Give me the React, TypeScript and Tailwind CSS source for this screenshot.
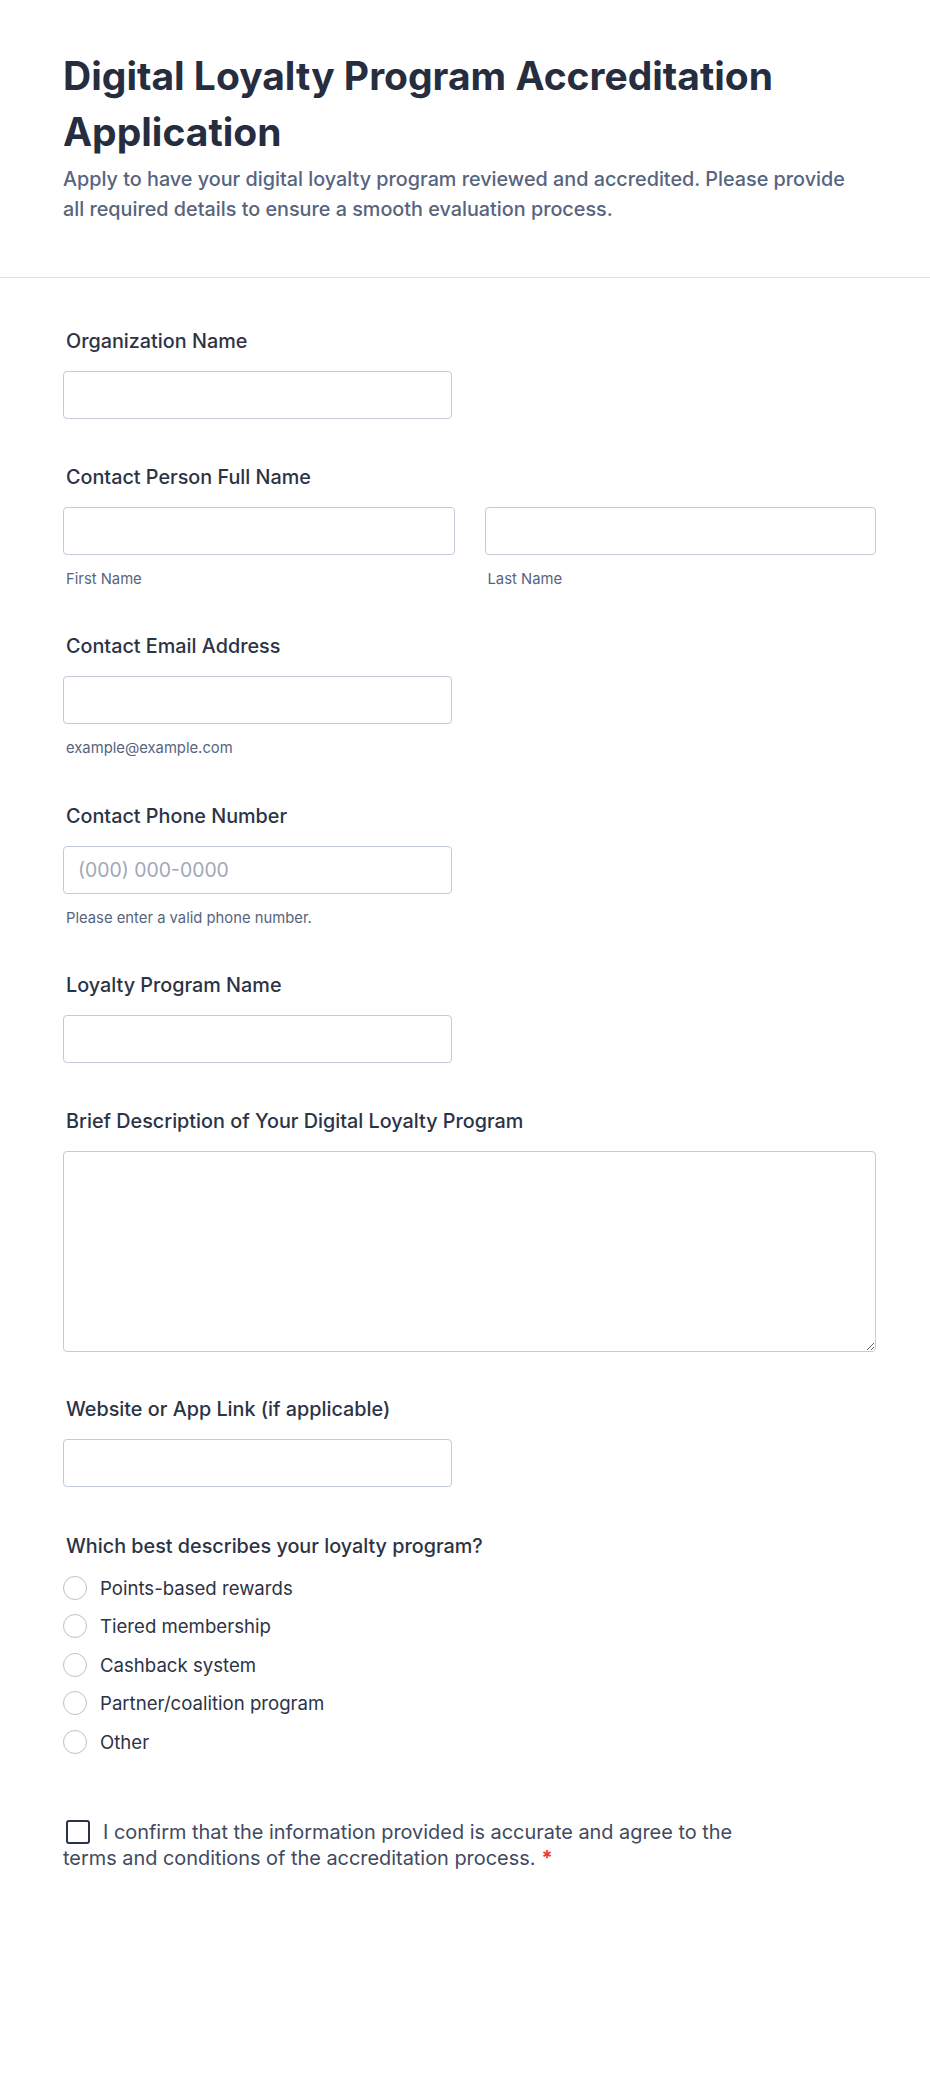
import React from "react";

const labelCls = "block pl-[3px] text-[19.8px] leading-[24px] font-medium text-[#2c3345]";
const inputCls =
  "block h-[48px] w-full rounded-[4px] border border-[#c3cad8] bg-white px-[14px] text-[19.4px] text-[#2c3345] placeholder:text-[#a0a8b9] outline-none";
const subCls = "mt-[14px] pl-[3px] text-[14.8px] leading-[20px] text-[#57647e]";

function Field({ label, children }: { label: string; children: React.ReactNode }) {
  return (
    <div className="flex flex-col">
      <label className={labelCls}>{label}</label>
      <div className="mt-[18px]">{children}</div>
    </div>
  );
}

export default function App() {
  const options = [
    "Points-based rewards",
    "Tiered membership",
    "Cashback system",
    "Partner/coalition program",
    "Other",
  ];
  return (
    <div
      className="min-h-[2077px] bg-white text-[#2c3345]"
      style={{ fontFamily: "Inter, 'Noto Sans', sans-serif" }}
    >
      <header className="border-b border-[#dcdfe8] px-[63px] pt-[48px] pb-[53px]">
        <h1 className="max-w-[800px] text-[39px] leading-[56px] font-bold text-[#262d3f]">
          Digital Loyalty Program Accreditation Application
        </h1>
        <p className="mt-[4px] max-w-[796px] text-[19.8px] leading-[30px] font-medium text-[#57647e]">
          Apply to have your digital loyalty program reviewed and accredited. Please provide all
          required details to ensure a smooth evaluation process.
        </p>
      </header>

      <main className="flex flex-col gap-[45.5px] pl-[63px] pr-[54px] pt-[51px]">
        <Field label="Organization Name">
          <input className={inputCls + " !w-[389px]"} type="text" />
        </Field>

        <div className="flex flex-col">
          <label className={labelCls}>Contact Person Full Name</label>
          <div className="mt-[18px] grid grid-cols-2 gap-[30px]">
            <div>
              <input className={inputCls} type="text" />
              <div className={subCls}>First Name</div>
            </div>
            <div>
              <input className={inputCls} type="text" />
              <div className={subCls}>Last Name</div>
            </div>
          </div>
        </div>

        <Field label="Contact Email Address">
          <input className={inputCls + " !w-[389px]"} type="email" />
          <div className={subCls}>example@example.com</div>
        </Field>

        <Field label="Contact Phone Number">
          <input className={inputCls + " !w-[389px]"} type="tel" placeholder="(000) 000-0000" />
          <div className={subCls}>Please enter a valid phone number.</div>
        </Field>

        <Field label="Loyalty Program Name">
          <input className={inputCls + " !w-[389px]"} type="text" />
        </Field>

        <Field label="Brief Description of Your Digital Loyalty Program">
          <textarea className="block h-[201px] w-full rounded-[4px] border border-[#c3cad8] bg-white p-[14px] text-[18px] outline-none" />
        </Field>

        <Field label="Website or App Link (if applicable)">
          <input className={inputCls + " !w-[389px]"} type="url" />
        </Field>

        <div className="mt-[1px] flex flex-col">
          <div className={labelCls}>Which best describes your loyalty program?</div>
          <div className="mt-[18px] flex flex-col gap-[14.5px]">
            {options.map((o) => (
              <label key={o} className="flex h-[24px] items-center">
                <span className="h-[24px] w-[24px] shrink-0 rounded-full border border-[#b9bfcc] bg-white" />
                <span className="ml-[13px] text-[18.6px] leading-[24px] text-[#2c3345]">{o}</span>
              </label>
            ))}
          </div>
        </div>

        <div className="mt-[16px] w-[690px] text-[19.9px] leading-[26px] text-[#414a5e]">
          <span className="relative top-[5px] mr-[13px] ml-[3px] inline-block h-[24px] w-[24px] rounded-[3px] border-2 border-[#2c3345] bg-white align-baseline" />
          I confirm that the information provided is accurate and agree to the terms and
          conditions of the accreditation process.
          <span className="ml-[6px] font-bold text-[#f23a3c]">*</span>
        </div>
      </main>
    </div>
  );
}
